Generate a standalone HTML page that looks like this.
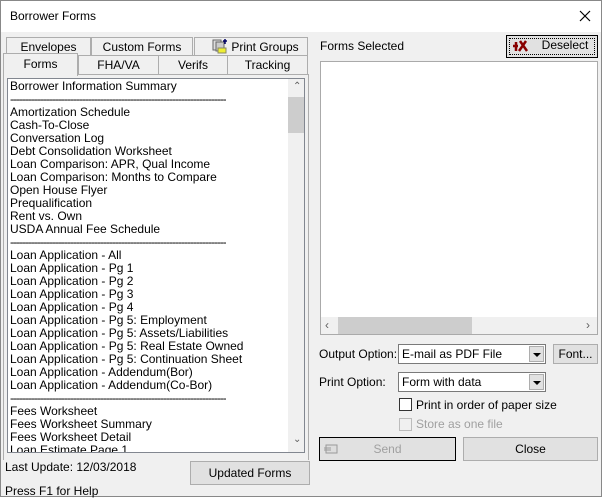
<!DOCTYPE html>
<html><head><style>
*{margin:0;padding:0;box-sizing:border-box}
body{width:602px;height:497px;overflow:hidden;font-family:"Liberation Sans",Arial,sans-serif;font-size:11.5px;color:#000;background:#fff}
.win{position:absolute;left:0;top:0;width:602px;height:497px;border:1px solid #888;background:#f0f0f0}
.title{position:absolute;left:0;top:0;width:600px;height:31px;background:#fff}
.a{position:absolute;white-space:nowrap}
.tab{position:absolute;border:1px solid #adadad;border-bottom:none;background:#f0f0f0;text-align:center;line-height:18px;font-size:12px}
.btn{position:absolute;border:1px solid #adadad;background:#e1e1e1;text-align:center;font-size:12px}
.list{position:absolute;background:#fff;border:1px solid #828790}
.combo{position:absolute;background:#fff;border:1px solid #7a7a7a;font-size:12px;padding-left:3px;line-height:18px}
.dd{position:absolute;right:1px;top:1px;width:15px;height:16px;background:#e1e1e1;border:1px solid #adadad}
.dd:after{content:"";position:absolute;left:3px;top:6px;border-left:4px solid transparent;border-right:4px solid transparent;border-top:4px solid #000}
.cb{position:absolute;width:13px;height:13px;background:#fff;border:1px solid #333}
.items div{height:13px;line-height:13px;font-size:12px;padding-left:2px}
.dash{letter-spacing:-1px;overflow:hidden;width:218px}
</style></head><body>
<div class="win">
<div class="title"><span class="a" style="left:9px;top:8px;font-size:12px">Borrower Forms</span>
<svg class="a" style="left:578px;top:9px" width="12" height="12"><path d="M1 1L11 11M11 1L1 11" stroke="#000" stroke-width="1.2"/></svg></div>

<div class="tab" style="left:5px;top:36px;width:85px;height:18px">Envelopes</div>
<div class="tab" style="left:90px;top:36px;width:102px;height:18px">Custom Forms</div>
<div class="tab" style="left:193px;top:36px;width:114px;height:18px"><svg style="position:absolute;left:17px;top:1px" width="17" height="15"><rect x="1" y="1" width="8" height="10" fill="#ddd" stroke="#666"/><rect x="4" y="3" width="8" height="9" fill="#ccc" stroke="#666"/><rect x="6" y="9" width="8" height="5" fill="#ee3" stroke="#886"/><path d="M11 2h4M13 0v5" stroke="#006" stroke-width="1.5"/></svg><span style="padding-left:28px">Print Groups</span></div>
<div class="tab" style="left:77px;top:54px;width:81px;height:20px">FHA/VA</div>
<div class="tab" style="left:157px;top:54px;width:70px;height:20px">Verifs</div>
<div class="tab" style="left:226px;top:54px;width:81px;height:20px">Tracking</div>
<div class="a" style="left:2px;top:73px;width:306px;height:386px;border:1px solid #adadad;border-bottom:none;background:#f0f0f0"></div>
<div class="tab" style="left:2px;top:52px;width:75px;height:23px;line-height:20px;border-color:#adadad;z-index:2">Forms</div>

<div class="list" style="left:6px;top:77px;width:298px;height:375px;overflow:hidden">
<div class="items" style="position:absolute;left:0;top:1px;width:280px">
<div>Borrower Information Summary</div>
<div class="dash">------------------------------------------------------------------------------------</div>
<div>Amortization Schedule</div><div>Cash-To-Close</div><div>Conversation Log</div><div>Debt Consolidation Worksheet</div>
<div>Loan Comparison: APR, Qual Income</div><div>Loan Comparison: Months to Compare</div><div>Open House Flyer</div>
<div>Prequalification</div><div>Rent vs. Own</div><div>USDA Annual Fee Schedule</div>
<div class="dash">------------------------------------------------------------------------------------</div>
<div>Loan Application - All</div><div>Loan Application - Pg 1</div><div>Loan Application - Pg 2</div><div>Loan Application - Pg 3</div><div>Loan Application - Pg 4</div>
<div>Loan Application - Pg 5: Employment</div><div>Loan Application - Pg 5: Assets/Liabilities</div><div>Loan Application - Pg 5: Real Estate Owned</div>
<div>Loan Application - Pg 5: Continuation Sheet</div><div>Loan Application - Addendum(Bor)</div><div>Loan Application - Addendum(Co-Bor)</div>
<div class="dash">------------------------------------------------------------------------------------</div>
<div>Fees Worksheet</div><div>Fees Worksheet Summary</div><div>Fees Worksheet Detail</div><div>Loan Estimate Page 1</div>
</div>
<div class="a" style="left:280px;top:0;width:17px;height:373px;background:#f0f0f0"></div>
<div class="a" style="left:280px;top:18px;width:17px;height:36px;background:#cdcdcd"></div>
<span class="a" style="left:285px;top:2px;font-size:10px;color:#606060">&#8963;</span>
<span class="a" style="left:285px;top:355px;font-size:10px;color:#606060">&#8964;</span>
</div>

<span class="a" style="left:4px;top:459px;font-size:12px">Last Update: 12/03/2018</span>
<div class="btn" style="left:189px;top:460px;width:120px;height:24px;line-height:22px">Updated Forms</div>
<span class="a" style="left:4px;top:483px;font-size:12px">Press F1 for Help</span>

<span class="a" style="left:319px;top:38px;font-size:12px">Forms Selected</span>
<div class="btn" style="left:505px;top:34px;width:92px;height:23px;border:1px solid #000;line-height:19px"><div style="position:absolute;left:2px;top:2px;right:2px;bottom:2px;border:1px dotted #000"></div><svg style="position:absolute;left:4px;top:4px" width="18" height="13"><path d="M2 6h5M5 2v9M9 1l7 10M15 1l-7 10" stroke="#800" stroke-width="2.5"/></svg><span style="padding-left:26px">Deselect</span></div>

<div class="list" style="left:319px;top:60px;width:278px;height:274px;border-color:#aaa">
<div class="a" style="left:0;top:255px;width:276px;height:17px;background:#f0f0f0"></div>
<div class="a" style="left:17px;top:255px;width:134px;height:17px;background:#cdcdcd"></div>
<span class="a" style="left:4px;top:256px;color:#606060;font-size:12px">&lsaquo;</span>
<span class="a" style="left:265px;top:256px;color:#606060;font-size:12px">&rsaquo;</span>
</div>

<span class="a" style="left:318px;top:346px;font-size:12px">Output Option:</span>
<div class="combo" style="left:397px;top:343px;width:148px;height:20px">E-mail as PDF File<div class="dd"></div></div>
<div class="btn" style="left:552px;top:343px;width:45px;height:20px;line-height:18px">Font...</div>
<span class="a" style="left:318px;top:374px;font-size:12px">Print Option:</span>
<div class="combo" style="left:397px;top:371px;width:148px;height:20px">Form with data<div class="dd"></div></div>
<div class="cb" style="left:398px;top:397px"></div>
<span class="a" style="left:415px;top:397px;font-size:12px">Print in order of paper size</span>
<div class="cb" style="left:398px;top:417px;border-color:#bcbcbc;background:#f0f0f0"></div>
<span class="a" style="left:415px;top:416px;font-size:12px;color:#a0a0a0">Store as one file</span>
<div class="btn" style="left:318px;top:436px;width:137px;height:24px;line-height:22px;border-color:#000;color:#a0a0a0"><svg style="position:absolute;left:4px;top:6px" width="14" height="11"><rect x="2" y="1" width="11" height="8" fill="#ddd" stroke="#999"/><path d="M0 4h7M0 6h7" stroke="#999"/></svg>Send</div>
<div class="btn" style="left:462px;top:436px;width:135px;height:24px;line-height:22px">Close</div>
</div>
</body></html>
